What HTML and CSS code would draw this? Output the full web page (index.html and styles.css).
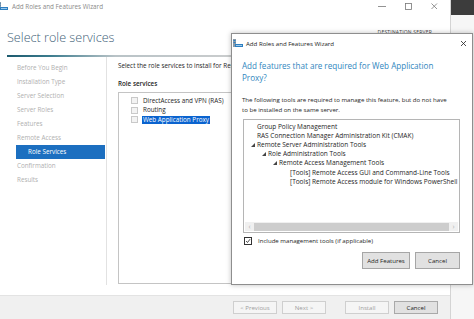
FILE: index.html
```html
<!DOCTYPE html>
<html>
<head>
<meta charset="utf-8">
<link rel="stylesheet" href="styles.css">
</head>
<body>
<div class="desk">
  <div class="mainwin">
    <div class="titlebar">
      <svg class="appicon" width="10" height="9" viewBox="0 0 10 9"><rect x="0" y="0" width="3" height="8" fill="#8a9aa8"/><rect x="0.5" y="1" width="2" height="1" fill="#2d7fc1"/><rect x="0.5" y="3" width="2" height="1" fill="#2d7fc1"/><rect x="2" y="5" width="8" height="3" fill="#2d7fc1"/><rect x="3" y="6" width="6" height="1" fill="#9cc8ea"/></svg>
      <span class="wtitle">Add Roles and Features Wizard</span>
      <div class="controls">
        <svg width="8" height="8" viewBox="0 0 8 8"><line x1="0" y1="4.5" x2="8" y2="4.5" stroke="#777" stroke-width="0.8"/></svg>
        <svg width="8" height="8" viewBox="0 0 8 8"><rect x="1.5" y="1.5" width="6" height="6" fill="none" stroke="#777" stroke-width="0.8"/></svg>
        <svg width="8" height="8" viewBox="0 0 8 8"><path d="M1.5 1.5 L7 7 M7 1.5 L1.5 7" stroke="#777" stroke-width="0.8"/></svg>
      </div>
    </div>
    <div class="header">
      <h1 class="heading">Select role services</h1>
      <div class="dest">DESTINATION SERVER</div>
    </div>
    <div class="rule"></div>
    <div class="body">
      <nav class="nav">
        <div class="navitem">Before You Begin</div>
        <div class="navitem">Installation Type</div>
        <div class="navitem">Server Selection</div>
        <div class="navitem">Server Roles</div>
        <div class="navitem">Features</div>
        <div class="navitem">Remote Access</div>
        <div class="navitem sel">Role Services</div>
        <div class="navitem">Confirmation</div>
        <div class="navitem">Results</div>
      </nav>
      <div class="content">
        <div class="intro">Select the role services to install for Remote Access</div>
        <div class="label">Role services</div>
        <div class="listbox">
          <div class="roleitem"><span class="cb"></span><span class="rtext">DirectAccess and VPN (RAS)</span></div>
          <div class="roleitem"><span class="cb"></span><span class="rtext">Routing</span></div>
          <div class="roleitem"><span class="cb"></span><span class="rtext hl">Web Application Proxy</span></div>
        </div>
      </div>
    </div>
    <div class="bottombar">
      <button class="btn dis">&lt; Previous</button>
      <button class="btn dis">Next &gt;</button>
      <button class="btn dis install">Install</button>
      <button class="btn act">Cancel</button>
    </div>
  </div>
  <div class="side">
    <div class="sidedark"></div>
  </div>

  <div class="dialog">
    <div class="dtitlebar">
      <svg class="dicon" width="10" height="9" viewBox="0 0 10 9"><rect x="0" y="0" width="3" height="8" fill="#8a9aa8"/><rect x="0.5" y="1" width="2" height="1" fill="#2d7fc1"/><rect x="0.5" y="3" width="2" height="1" fill="#2d7fc1"/><rect x="2" y="5" width="8" height="3" fill="#2d7fc1"/><rect x="3" y="6" width="6" height="1" fill="#9cc8ea"/></svg>
      <span class="dtitle">Add Roles and Features Wizard</span>
      <svg class="dclose" width="7" height="7" viewBox="0 0 7 7"><path d="M1 1 L6 6 M6 1 L1 6" stroke="#222" stroke-width="0.8"/></svg>
    </div>
    <div class="dbody">
      <div class="dheading">Add features that are required for Web Application Proxy?</div>
      <p class="dpara">The following tools are required to manage this feature, but do not have to be installed on the same server.</p>
      <div class="treebox">
        <div class="tree">
          <div class="titem l0"><span class="exp"></span>Group Policy Management</div>
          <div class="titem l0"><span class="exp"></span>RAS Connection Manager Administration Kit (CMAK)</div>
          <div class="titem l0"><span class="exp"><svg width="4" height="4" viewBox="0 0 4 4"><polygon points="4,0 4,4 0,4" fill="#444"/></svg></span>Remote Server Administration Tools</div>
          <div class="titem l1"><span class="exp"><svg width="4" height="4" viewBox="0 0 4 4"><polygon points="4,0 4,4 0,4" fill="#444"/></svg></span>Role Administration Tools</div>
          <div class="titem l2"><span class="exp"><svg width="4" height="4" viewBox="0 0 4 4"><polygon points="4,0 4,4 0,4" fill="#444"/></svg></span>Remote Access Management Tools</div>
          <div class="titem l3"><span class="exp"></span>[Tools] Remote Access GUI and Command-Line Tools</div>
          <div class="titem l3"><span class="exp"></span>[Tools] Remote Access module for Windows PowerShell</div>
        </div>
        <div class="hscroll">
          <span class="arr">&lsaquo;</span>
          <div class="thumb"></div>
          <span class="arr">&rsaquo;</span>
        </div>
      </div>
      <div class="checkrow">
        <span class="chk"><svg width="8" height="8" viewBox="0 0 8 8"><path d="M1.5 4 L3.3 6 L6.8 1.5" fill="none" stroke="#111" stroke-width="1"/></svg></span>
        <span>Include management tools (if applicable)</span>
      </div>
      <div class="dbuttons">
        <button class="dbtn">Add Features</button>
        <button class="dbtn">Cancel</button>
      </div>
    </div>
  </div>
</div>
</body>
</html>
```

FILE: styles.css
```css
* { box-sizing: border-box; }
html, body { margin: 0; padding: 0; }
body {
  width: 474px;
  height: 319px;
  overflow: hidden;
  font-family: "Open Sans", "Noto Sans", sans-serif;
  color: #1e1e1e;
  background: #f4f4f4;
}
.desk {
  position: relative;
  display: flex;
  width: 474px;
  height: 319px;
}
.mainwin {
  width: 451px;
  height: 319px;
  background: #fff;
  border-right: 1px solid #d4d4d4;
  display: flex;
  flex-direction: column;
}
.side {
  flex: 1;
  background: #f6f6f6;
}
.sidedark {
  height: 15px;
  background: #3c3c3c;
}
.titlebar {
  height: 15px;
  display: flex;
  align-items: center;
}
.appicon { margin-left: -2px; margin-top: -3px; }
.wtitle {
  margin-left: 4px;
  font-size: 6.3px;
  color: #8a8a8a;
  margin-top: -3px;
}
.controls {
  margin-left: auto;
  margin-right: 12px;
  display: flex;
  gap: 18px;
  margin-top: -4px;
}
.header {
  height: 40px;
  display: flex;
  align-items: flex-start;
  padding: 15px 0 0 7px;
}
.heading {
  margin: 0;
  font-size: 12.6px;
  font-weight: 300;
  line-height: 16px;
  color: #3f5f78;
}
.dest {
  margin-left: auto;
  margin-right: 18px;
  margin-top: -1px;
  font-size: 5px;
  color: #444;
  letter-spacing: 0.2px;
}
.rule {
  height: 2px;
  margin: 0 10px 0 7px;
  background: linear-gradient(to right, #1c5a6e 0%, #3c7c8e 10%, #b9c3c7 25%, #cfcfcf 60%, #d8d8d8 100%);
}
.body {
  flex: 1;
  display: flex;
}
.nav {
  width: 107px;
  border-right: 1px solid #e2e2e2;
  padding-top: 4px;
  margin-bottom: 10px;
}
.navitem {
  height: 14px;
  line-height: 14px;
  padding-left: 17px;
  font-size: 6.3px;
  color: #b0b0b0;
}
.navitem.sel {
  margin-left: 16px;
  margin-right: 1px;
  padding-left: 12px;
  background: #1c6fc0;
  color: #fff;
}
.content {
  flex: 1;
  padding: 4px 0 0 11px;
}
.intro {
  font-size: 6.3px;
  line-height: 10px;
  white-space: nowrap;
}
.label {
  margin-top: 8px;
  font-size: 6.3px;
  line-height: 10px;
  font-weight: 600;
}
.listbox {
  margin-top: 3px;
  width: 230px;
  height: 192px;
  border: 1px solid #c4c4c4;
  padding: 3px 0 0 12px;
}
.roleitem {
  display: flex;
  align-items: center;
  height: 9.5px;
  font-size: 6.3px;
}
.cb {
  width: 7px;
  height: 7px;
  border: 1px solid #c9c9c9;
  background: #f3f3f3;
}
.rtext {
  margin-left: 4px;
  padding: 0 1px;
  line-height: 8.5px;
}
.rtext.hl {
  background: #0a63cf;
  color: #fff;
}
.bottombar {
  height: 24px;
  background: #f0f0f0;
  border-top: 1px solid #e3e3e3;
  display: flex;
  align-items: center;
  justify-content: flex-end;
  gap: 5px;
  padding: 0 12px 0 0;
}
.btn {
  height: 13px;
  width: 44px;
  padding: 0;
  font-family: inherit;
  font-size: 6.1px;
  border: 1px solid #cfcfcf;
  background: #f5f5f5;
  color: #9e9e9e;
}
.btn.install { margin-left: 14px; }
.btn.act {
  background: #e1e1e1;
  border-color: #a9a9a9;
  color: #222;
}
.dialog {
  position: absolute;
  left: 231px;
  top: 33px;
  width: 242px;
  height: 252px;
  background: #fff;
  border: 1px solid #8e8e8e;
  box-shadow: 0 0 5px rgba(0,0,0,0.25);
  display: flex;
  flex-direction: column;
}
.dtitlebar {
  height: 19px;
  display: flex;
  align-items: center;
  padding-left: 1px;
}
.dtitle {
  margin-left: 3px;
  font-size: 6.1px;
  color: #222;
}
.dclose { margin-left: auto; margin-right: 5px; }
.dbody {
  padding: 7px 12px 0 10px;
  display: flex;
  flex-direction: column;
}
.dheading {
  font-size: 8.1px;
  line-height: 12px;
  color: #2f86be;
  width: 200px;
}
.dpara {
  margin: 11px 0 0 0;
  width: 206px;
  font-size: 6.1px;
  line-height: 10px;
}
.treebox {
  margin: 4px 0 0 1px;
  height: 114px;
  border: 1px solid #b5b5b5;
  display: flex;
  flex-direction: column;
  overflow: hidden;
}
.tree {
  flex: 1;
  padding-top: 2px;
  overflow: hidden;
}
.titem {
  display: flex;
  align-items: center;
  height: 9.1px;
  font-size: 6.5px;
  white-space: nowrap;
}
.exp {
  width: 7px;
  flex: none;
  display: flex;
  align-items: center;
  padding-left: 1px;
}
.l0 { padding-left: 6px; }
.l1 { padding-left: 17px; }
.l2 { padding-left: 28px; }
.l3 { padding-left: 39px; }
.hscroll {
  height: 9px;
  margin: 0 1px 1px 1px;
  background: #f0f0f0;
  display: flex;
  align-items: center;
}
.arr {
  width: 9px;
  text-align: center;
  font-size: 7px;
  color: #b0b0b0;
  line-height: 9px;
}
.thumb {
  flex: 1;
  height: 8px;
  background: #cdcdcd;
}
.checkrow {
  margin-top: 3px;
  height: 9px;
  display: flex;
  align-items: center;
  font-size: 6.1px;
  padding-left: 2px;
}
.chk {
  width: 8px;
  height: 8px;
  border: 1px solid #333;
  margin-right: 6px;
  display: flex;
  align-items: center;
  justify-content: center;
}
.chk svg { width: 6px; height: 6px; }
.dbuttons {
  margin-top: 7px;
  display: flex;
  justify-content: flex-end;
  gap: 5px;
}
.dbtn {
  height: 17px;
  width: 45px;
  padding: 0;
  font-family: inherit;
  font-size: 6.1px;
  background: #e1e1e1;
  border: 1px solid #a6a6a6;
  color: #222;
}
.dbtn:first-child { width: 48px; }
```
